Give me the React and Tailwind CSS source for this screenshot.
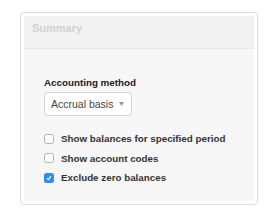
export default function App() {
  return (
    <div className="w-[277px] h-[215px] bg-white pt-[12px] pl-[20px]" style={{ fontFamily: '"Liberation Sans", Arial, sans-serif' }}>
      <div className="w-[238px] h-[193px] border border-[#dcdcdc] rounded-[4px] p-[3px] bg-white">
        <div className="h-full bg-[#f7f7f7] flex flex-col">
          {/* Header */}
          <div className="h-[33px] bg-[#f2f2f2] border-b border-[#e9e9e9] px-[8px] pt-[6px] text-[11px] leading-[13px] font-bold text-[#d0d0d0]">
            Summary
          </div>

          {/* Body */}
          <div className="flex-1 pl-[20px] pt-[27px]">
            <p className="text-[9.8px] leading-[13px] font-bold text-[#222]">Accounting method</p>
            <div className="mt-[3px] w-[88px] h-[24px] bg-white border border-[#d4d4d4] rounded-[3px] flex items-center justify-between pl-[6px] pr-[7px]">
              <span className="text-[10.5px] leading-[13px] text-[#444]">Accrual basis</span>
              <svg width="5" height="4" viewBox="0 0 5 4">
                <path d="M0 0h5L2.5 4z" fill="#999" />
              </svg>
            </div>

            <div className="mt-[16px] flex flex-col gap-[6.5px]">
              <Check label="Show balances for specified period" />
              <Check label="Show account codes" />
              <Check label="Exclude zero balances" checked />
            </div>
          </div>
        </div>
      </div>
    </div>
  )
}

function Check({ label, checked }) {
  return (
    <div className="h-[13px] flex items-center gap-[7px]">
      {checked ? (
        <span className="w-[10px] h-[10px] rounded-[2.5px] bg-[#2f8cf0] flex items-center justify-center">
          <svg width="6" height="6" viewBox="0 0 6 6">
            <path d="M1 3.2L2.4 4.6L5 1.2" fill="none" stroke="white" strokeWidth="1.2" />
          </svg>
        </span>
      ) : (
        <span className="w-[10px] h-[10px] rounded-[2.5px] bg-white border border-[#b0b0b0]" />
      )}
      <span className="text-[9.8px] leading-[13px] font-bold text-[#333]">{label}</span>
    </div>
  )
}
